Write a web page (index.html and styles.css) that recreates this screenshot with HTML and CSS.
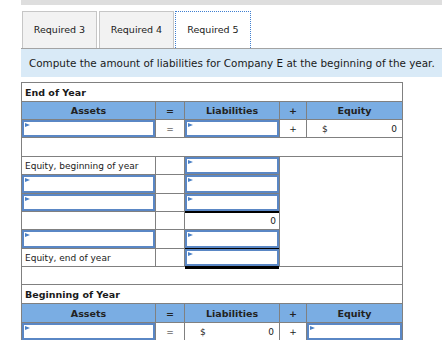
FILE: index.html
```html
<!DOCTYPE html>
<html lang="en">
<head>
    <meta charset="UTF-8">
    <title>Required 5</title>
    <link rel="stylesheet" href="styles.css">
</head>
<body>
    <div class="paneel">
        <div class="balk"></div>

        <div class="tabs">
            <div class="tab">Required 3</div>
            <div class="tab">Required 4</div>
            <div class="tab actief">Required 5</div>
        </div>

        <p class="opdracht">Compute the amount of liabilities for Company E at the beginning of the year.</p>

        <table class="raster">
            <colgroup>
                <col class="k-assets">
                <col class="k-teken">
                <col class="k-liab">
                <col class="k-plus">
                <col class="k-equity">
            </colgroup>
            <tr class="hoog">
                <td colspan="5" class="titel">End of Year</td>
            </tr>
            <tr class="kop">
                <th>Assets</th>
                <th>=</th>
                <th>Liabilities</th>
                <th>+</th>
                <th>Equity</th>
            </tr>
            <tr>
                <td class="veld"><div class="invoer"></div></td>
                <td class="teken">=</td>
                <td class="veld"><div class="invoer"></div></td>
                <td class="teken">+</td>
                <td class="bedrag"><span>$</span><span>0</span></td>
            </tr>
            <tr class="hoog">
                <td colspan="5"></td>
            </tr>
            <tr>
                <td class="label">Equity, beginning of year</td>
                <td></td>
                <td class="veld"><div class="invoer"></div></td>
                <td colspan="2" rowspan="6"></td>
            </tr>
            <tr class="hoog">
                <td class="veld"><div class="invoer"></div></td>
                <td></td>
                <td class="veld"><div class="invoer"></div></td>
            </tr>
            <tr>
                <td class="veld"><div class="invoer"></div></td>
                <td></td>
                <td class="veld totaal"><div class="invoer"></div></td>
            </tr>
            <tr>
                <td></td>
                <td></td>
                <td class="getal">0</td>
            </tr>
            <tr class="hoog">
                <td class="veld"><div class="invoer"></div></td>
                <td></td>
                <td class="veld totaal"><div class="invoer"></div></td>
            </tr>
            <tr>
                <td class="label">Equity, end of year</td>
                <td></td>
                <td class="veld dubbel"><div class="invoer"></div></td>
            </tr>
            <tr>
                <td colspan="5"></td>
            </tr>
            <tr class="hoog">
                <td colspan="5" class="titel">Beginning of Year</td>
            </tr>
            <tr class="kop hoog">
                <th>Assets</th>
                <th>=</th>
                <th>Liabilities</th>
                <th>+</th>
                <th>Equity</th>
            </tr>
            <tr>
                <td class="veld"><div class="invoer"></div></td>
                <td class="teken">=</td>
                <td class="bedrag"><span>$</span><span>0</span></td>
                <td class="teken">+</td>
                <td class="veld"><div class="invoer"></div></td>
            </tr>
        </table>
    </div>
</body>
</html>
```

FILE: styles.css
```css
body {
    margin: 0;
    font-family: "DejaVu Sans", Verdana, sans-serif;
    color: #1a1a1a;
    background: #fff;
}

.paneel {
    margin-left: 21px;
}

.balk {
    height: 5px;
    background-color: #dedede;
}

.tabs {
    display: flex;
    gap: 2px;
    margin-top: 6px;
    padding-left: 1px;
    border-bottom: 1px solid #a3a3a3;
}

.tab {
    width: 73px;
    height: 36px;
    line-height: 36px;
    text-align: center;
    font-size: 9.5px;
    background-color: #f2f2f2;
    border: 1px solid #c6c6c6;
    border-bottom: none;
}

.tab.actief {
    width: 74px;
    background-color: #fff;
    border: 1px dotted #3f7fd0;
    border-bottom: none;
    margin-left: -1px;
}

.opdracht {
    margin: 0;
    height: 28px;
    line-height: 28px;
    padding-left: 8px;
    font-size: 10.4px;
    background-color: #d9eaf7;
    white-space: nowrap;
}

.raster {
    margin-top: 5px;
    border-collapse: collapse;
    table-layout: fixed;
    width: 381px;
    font-size: 9px;
}

.k-assets { width: 134px; }
.k-teken { width: 29px; }
.k-liab { width: 95px; }
.k-plus { width: 27px; }
.k-equity { width: 96px; }

.raster td,
.raster th {
    border: 1px solid #808080;
    height: 17px;
    padding: 0 3px;
}

.raster .hoog td,
.raster .hoog th {
    height: 18px;
}

.titel {
    font-weight: bold;
    font-size: 9.5px;
}

.kop th {
    background-color: #7aade3;
    font-weight: bold;
    font-size: 9.5px;
    text-align: center;
    color: #222;
}

.teken {
    text-align: center;
}

.raster td.veld {
    padding: 0;
}

.invoer {
    position: relative;
    height: 17px;
    border: 2px solid #5a87c5;
    box-sizing: border-box;
    background: #fff;
}

.hoog .invoer {
    height: 18px;
}

.invoer::before {
    content: "";
    position: absolute;
    top: 1px;
    left: 1px;
    border-left: 5px solid #4a80c6;
    border-top: 2.5px solid transparent;
    border-bottom: 2.5px solid transparent;
}

.totaal .invoer {
    z-index: 1;
    box-shadow: 0 2px 0 #000;
}

.dubbel .invoer {
    z-index: 1;
    box-shadow: 0 3px 0 #000;
}

.raster td.bedrag {
    padding: 0 5px 0 15px;
}

.bedrag span:last-child {
    float: right;
}

.getal {
    text-align: right;
}
```
